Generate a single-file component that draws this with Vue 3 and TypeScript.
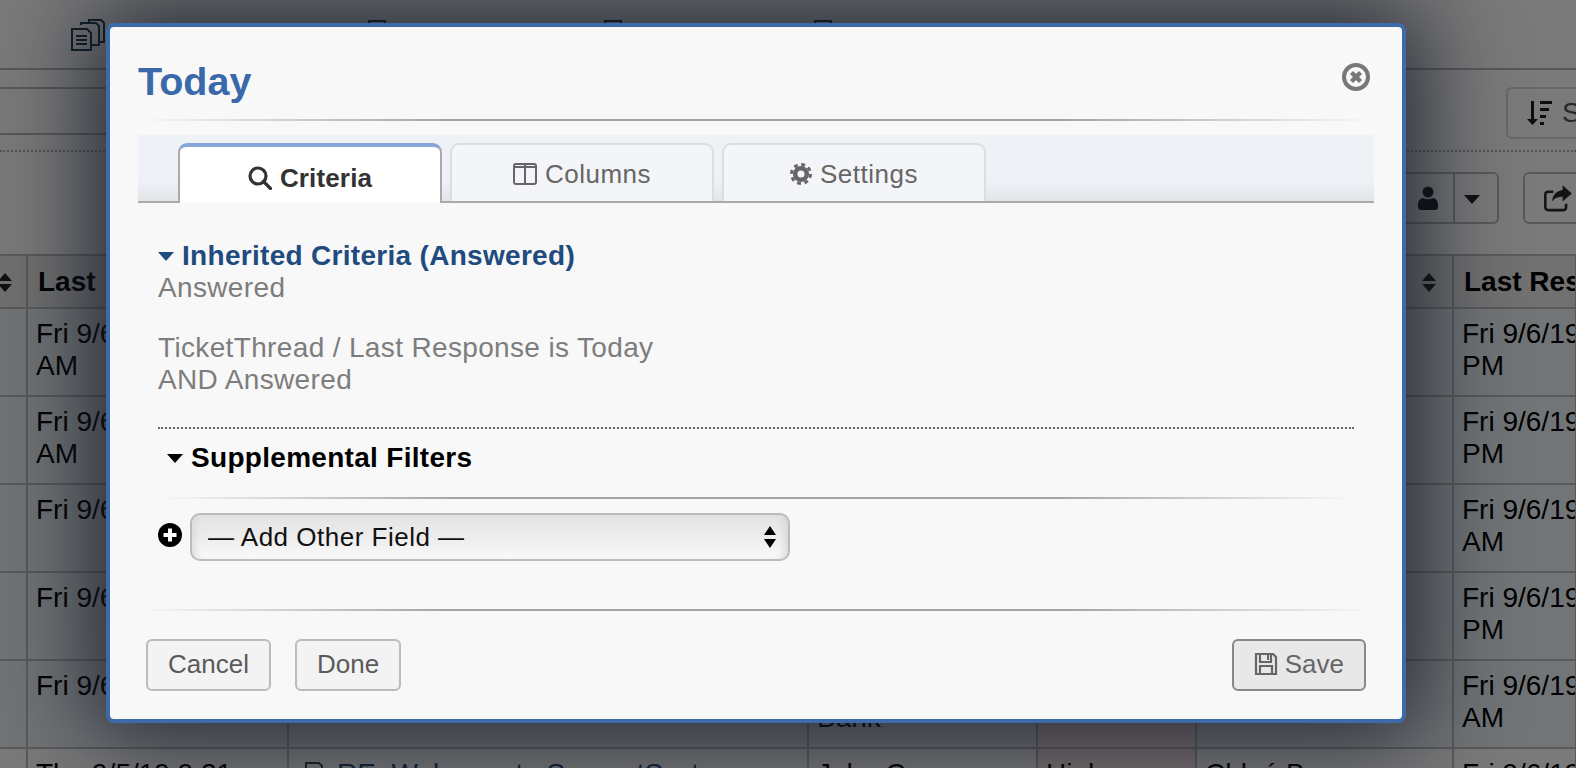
<template>
  <div class="page">
    <!-- page behind the dialog -->
    <div class="topbar">
      <svg class="docs" width="34" height="32" viewBox="0 0 34 32" fill="none" stroke="#1d3f56" stroke-width="2">
        <path d="M18 4V1h12l3 3v19h-5" />
        <path d="M10 6V4h15l3 3v19h-7" />
        <path d="M1 10h15l4 4v17H1z" />
        <path d="M5 17h11M5 21h11M5 25h11" />
      </svg>
      <i class="peek" style="left: 368px"></i>
      <i class="peek" style="left: 604px"></i>
      <i class="peek" style="left: 814px"></i>
    </div>
    <div class="searchrow">
      <div class="searchbox"></div>
      <button class="sort">
        <svg width="26" height="26" viewBox="0 0 26 26" fill="#1f1f22">
          <path d="M5 1h3v18h4l-5.500 6L1 19h4zM14 1h12v3H14zM14 8h9v3h-9zM14 15h6v3h-6zM14 22h4v3h-4z" />
        </svg>
        Sort
      </button>
    </div>
    <div class="actions">
      <div class="group">
        <span class="group-cell">
          <svg width="22" height="24" viewBox="0 0 22 24" fill="#1f1f24">
            <circle cx="11" cy="6" r="5.500" />
            <path d="M1 19c0-5 3-7 5-7 2 1.500 8 1.500 10 0 2 0 5 2 5 7v2c0 1.500-1 3-3 3H4c-2 0-3-1.500-3-3z" />
          </svg>
        </span>
        <span class="group-cell caret-cell"><i class="caret-dark"></i></span>
      </div>
      <div class="share">
        <svg width="30" height="28" viewBox="0 0 26 24" fill="none" stroke="#2a2a2e" stroke-width="2.200">
          <path d="M20 17v3c0 1.500-1 2.500-2.500 2.500h-13C3 22.500 2 21.500 2 20V9c0-1.500 1-2.500 2.500-2.500H9" />
          <path d="M17 1l8 7-8 7v-4c-4 0-7 1-9 4 0-6 4-9 9-10z" fill="#2a2a2e" stroke="none" />
        </svg>
      </div>
    </div>
    <table class="grid">
      <colgroup>
        <col v-for="w in colWidths" :key="w" :style="{ width: w + 'px' }" />
      </colgroup>
      <thead>
        <tr>
          <th><span class="sorter left"></span></th>
          <th>Last</th>
          <th></th>
          <th></th>
          <th></th>
          <th><span class="sorter right"></span></th>
          <th>Last Response</th>
        </tr>
      </thead>
      <tbody>
        <tr v-for="(row, i) in rows" :key="i">
          <td></td>
          <td>{{ row.first }}</td>
          <td></td>
          <td>{{ row.owner }}</td>
          <td class="high"></td>
          <td></td>
          <td>{{ row.last }}</td>
        </tr>
        <tr class="plain">
          <td></td>
          <td>Thu 9/5/19 9:21</td>
          <td class="subject">
            <svg class="ticket" width="22" height="22" viewBox="0 0 22 22" fill="none" stroke="#444" stroke-width="2">
              <path d="M3 2h13l3 3v16H3z" />
            </svg>
            <a>RE: Welcome to SupportSystem</a>
            <i class="dot" style="right: 46px"></i>
            <i class="dot" style="right: 20px"></i>
          </td>
          <td>John C</td>
          <td class="high">High</td>
          <td>Chloé B</td>
          <td>Fri 9/6/19</td>
        </tr>
      </tbody>
    </table>

    <div class="overlay"></div>

    <!-- dialog -->
    <div class="dialog">
      <div class="head">
        <h1>Today</h1>
        <svg class="close" width="28" height="28" viewBox="0 0 28 28">
          <circle cx="14" cy="14" r="12" fill="none" stroke="#777" stroke-width="4" />
          <path d="M9.500 9.500l9 9M18.500 9.500l-9 9" stroke="#777" stroke-width="4.500" />
        </svg>
      </div>
      <hr class="fade" />

      <div class="tabs">
        <div v-for="t in tabs" :key="t.name" class="tab" :class="{ active: t.name === activeTab }">
          <svg v-if="t.name === 'Criteria'" width="24" height="24" viewBox="0 0 24 24" fill="none" stroke="#333" stroke-width="3.200">
            <circle cx="10" cy="10" r="8" />
            <path d="M15.500 15.500l7 7" stroke-linecap="round" />
          </svg>
          <svg v-else-if="t.name === 'Columns'" width="24" height="22" viewBox="0 0 24 22" fill="none" stroke="#666" stroke-width="2">
            <rect x="1" y="1" width="22" height="20" rx="2" />
            <path d="M12 1v20M1 4h22" />
          </svg>
          <svg v-else width="22" height="22" viewBox="0 0 22 22">
            <circle cx="11" cy="11" r="9.500" fill="none" stroke="#666" stroke-width="3" stroke-dasharray="3.800 3.660" />
            <circle cx="11" cy="11" r="5.800" fill="none" stroke="#666" stroke-width="4.500" />
          </svg>
          <span>{{ t.name }}</span>
        </div>
      </div>

      <div class="body">
        <h2 class="inherited"><i class="caret blue"></i>Inherited Criteria (Answered)</h2>
        <p class="crit">Answered</p>
        <p class="crit spaced">TicketThread / Last Response is Today<br />AND Answered</p>
        <div class="dots"></div>
        <h2 class="supp"><i class="caret"></i>Supplemental Filters</h2>
        <hr class="fade narrow" />
        <div class="addrow">
          <svg width="24" height="24" viewBox="0 0 24 24">
            <circle cx="12" cy="12" r="12" fill="#000" />
            <path d="M12 5.500v13M5.500 12h13" stroke="#fff" stroke-width="4" />
          </svg>
          <div class="selectwrap">
            <select v-model="field">
              <option>— Add Other Field —</option>
            </select>
            <svg class="updown" width="14" height="24" viewBox="0 0 14 24" fill="#000">
              <path d="M7 1l6 9H1zM1 14h12l-6 9z" />
            </svg>
          </div>
        </div>
      </div>

      <hr class="fade" />
      <div class="foot">
        <button class="btn">Cancel</button>
        <button class="btn">Done</button>
        <button class="btn save">
          <svg width="24" height="24" viewBox="0 0 24 24" fill="none" stroke="#666" stroke-width="2.200">
            <path d="M2 2h17l3 3v17H2z" />
            <path d="M6 2v8h11V2M6 22v-8h12v8" />
            <path d="M13 3h2v5h-2z" fill="#666" stroke="none" />
          </svg>
          Save
        </button>
      </div>
    </div>
  </div>
</template>

<script setup lang="ts">
import { ref } from 'vue'

interface Row { first: string; owner: string; last: string }

const colWidths = [27, 261, 520, 229, 159, 257, 123]

const rows: Row[] = [
  { first: 'Fri 9/6/19 9:14\nAM', owner: '', last: 'Fri 9/6/19 1:05\nPM' },
  { first: 'Fri 9/6/19 9:02\nAM', owner: '', last: 'Fri 9/6/19 12:41\nPM' },
  { first: 'Fri 9/6/19 8:47', owner: '', last: 'Fri 9/6/19 11:32\nAM' },
  { first: 'Fri 9/6/19 8:30', owner: '', last: 'Fri 9/6/19 12:15\nPM' },
  { first: 'Fri 9/6/19 8:12', owner: 'First National\nBank', last: 'Fri 9/6/19 10:58\nAM' },
]

const tabs = [{ name: 'Criteria' }, { name: 'Columns' }, { name: 'Settings' }]
const activeTab = ref('Criteria')
const field = ref('— Add Other Field —')
</script>

<style>
html, body { margin: 0; overflow: hidden; }
</style>

<style scoped>
.page {
  position: relative;
  width: 1576px;
  height: 768px;
  overflow: hidden;
  background: #fff;
  font-family: "Liberation Sans", Arial, sans-serif;
  font-size: 28px;
  line-height: 32px;
  color: #000;
}

/* background page */
.topbar { position: relative; height: 68px; border-bottom: 2px solid #b8b8b8; }
.docs { position: absolute; left: 71px; top: 19px; }
.peek { position: absolute; top: 20px; width: 18px; height: 8px; border: 2px solid #1d3f56; box-sizing: border-box; }
.searchrow {
  display: flex;
  justify-content: space-between;
  height: 82px;
  padding-top: 17px;
  box-sizing: border-box;
  border-bottom: 2px dotted #b0b0b0;
}
.searchbox { width: 300px; height: 44px; border-top: 2px solid #b8b8b8; border-bottom: 2px solid #b8b8b8; }
.sort {
  display: flex;
  align-items: center;
  gap: 10px;
  margin-left: auto;
  width: 120px;
  margin-right: -50px;
  height: 52px;
  padding: 0 18px 0 12px;
  border: 2px solid #d8d8d8;
  border-radius: 6px;
  background: #fff;
  color: #555;
  font: inherit;
}
.sort svg { margin-left: 6px; flex: none; }
.actions { display: flex; justify-content: flex-end; gap: 24px; height: 102px; padding: 20px 0 0; box-sizing: border-box; margin-right: -30px; }
.group { display: flex; height: 52px; width: 200px; border: 2px solid #bbb; border-radius: 6px; box-sizing: border-box; justify-content: flex-end; }
.group-cell { display: flex; align-items: center; justify-content: center; width: 44px; margin-right: 3px; }
.caret-cell { border-left: 2px solid #bbb; width: 44px; margin-right: 0; padding-right: 8px; box-sizing: border-box; }
.caret-dark { border: 8px solid transparent; border-top: 9px solid #222; border-bottom: 0; margin-top: 2px; }
.share { display: flex; align-items: center; padding-left: 18px; width: 83px; height: 52px; border: 2px solid #bbb; border-radius: 6px; box-sizing: border-box; }

.grid { table-layout: fixed; width: 1576px; border-collapse: collapse; }
.grid th, .grid td {
  border: 2px solid #bdbdbd;
  padding: 9px 8px 0;
  text-align: left;
  vertical-align: top;
  overflow: hidden;
  white-space: pre;
  height: 88px;
  box-sizing: border-box;
}
.grid tr > :first-child { border-left: 0; }
.grid th { height: 53px; padding: 10px 10px 0; background: #ececec; position: relative; }
.grid td { background: #eff4f8; }
.grid .plain td { background: #fff; }
.grid td.high { background: #ffeaea; }
.grid .subject { position: relative; }
.ticket { position: absolute; left: 14px; top: 12px; }
.subject a { margin-left: 40px; color: #1f4a80; }
.dot { position: absolute; top: 20px; width: 16px; height: 16px; border-radius: 50%; background: #999; }
.sorter { position: absolute; top: 17px; width: 0; height: 0; border: 7px solid transparent; border-bottom: 8px solid #222; }
.sorter::after { content: ""; position: absolute; left: -7px; top: 11px; border: 7px solid transparent; border-top: 8px solid #222; border-bottom: 0; }
.sorter.left { left: -2px; top: 10px; }
.sorter.right { right: 16px; top: 10px; }

.overlay { position: absolute; inset: 0; background: rgba(0, 0, 0, 0.52); }

/* dialog */
.dialog {
  position: absolute;
  left: 106px;
  top: 23px;
  width: 1300px;
  height: 700px;
  box-sizing: border-box;
  padding: 0 28px;
  background: #f8f8f8;
  border: 4px solid #3d6aa8;
  border-radius: 8px;
  box-shadow: 0 0 95px 14px rgba(22, 26, 40, 0.88);
}
.head { display: flex; align-items: center; justify-content: space-between; height: 92px; padding: 18px 4px 2px 0; box-sizing: border-box; }
h1 { margin: 0; font-size: 39.500px; line-height: 46px; font-weight: 700; color: #3a69a9; }
.close { margin-top: -8px; }
.fade {
  height: 2px;
  margin: 0;
  border: 0;
  background: linear-gradient(to right, rgba(160, 160, 160, 0), #a4a4a4 25%, #a4a4a4 75%, rgba(160, 160, 160, 0));
}

.tabs {
  display: flex;
  gap: 8px;
  height: 68px;
  margin-top: 14px;
  padding: 8px 0 0 40px;
  box-sizing: border-box;
  background: linear-gradient(to bottom, #eef1f6 0, #eef1f6 70%, #e2e4e8 100%);
  border-bottom: 2px solid #aaa;
}
.tab {
  display: flex;
  align-items: center;
  justify-content: center;
  gap: 8px;
  width: 264px;
  height: 58px;
  box-sizing: border-box;
  padding-top: 2px;
  background: #f4f5f8;
  border: 2px solid #dcdde0;
  border-bottom: 0;
  border-radius: 9px 9px 0 0;
  color: #666;
  font-size: 26px;
  letter-spacing: 0.5px;
}
.tab.active {
  height: 60px;
  padding-top: 6px;
  gap: 8px;
  background: #fff;
  border-color: #85a6d6 #aaa #fff;
  border-width: 4px 2px 0;
  color: #333;
  font-weight: 700;
  letter-spacing: 0.15px;
}

.body { height: 406px; padding: 0 20px; box-sizing: border-box; }
h2 { margin: 0; font-size: 28px; line-height: 32px; font-weight: 700; display: flex; align-items: center; letter-spacing: 0.3px; }
.inherited { padding-top: 37px; color: #204b7e; }
.crit { margin: 0; color: #7d7d7d; font-size: 28px; line-height: 32px; letter-spacing: 0.35px; }
.crit.spaced { margin-top: 28px; }
.caret { display: inline-block; border: 8px solid transparent; border-top: 9px solid #000; border-bottom: 0; margin-right: 8px; }
.caret.blue { border-top-color: #204b7e; }
.dots { margin-top: 31px; border-top: 2px dotted #666; }
.supp { margin-top: 13px; padding-left: 9px; }
.narrow { margin-top: 23px; }
.addrow { display: flex; align-items: flex-start; gap: 8px; margin-top: 14px; }
.addrow > svg { margin-top: 10px; }
.selectwrap { position: relative; width: 600px; height: 48px; }
select {
  appearance: none;
  width: 100%;
  height: 100%;
  padding: 0 16px;
  box-sizing: border-box;
  font: 26px "Liberation Sans", Arial, sans-serif;
  letter-spacing: 0.5px;
  color: #111;
  border: 2px solid #bcbcbc;
  border-radius: 10px;
  background: linear-gradient(to bottom, #e4e4e4 0, #ececec 50%, #fafafa 100%);
  box-shadow: inset 8px 0 8px -6px #d8d8d8, inset -8px 0 8px -6px #d0d0d0;
}
.updown { position: absolute; right: 13px; top: 12px; pointer-events: none; }

.foot { display: flex; gap: 24px; padding: 28px 8px 0; }
.btn {
  display: flex;
  align-items: center;
  gap: 7px;
  height: 52px;
  padding: 0 20px 2px;
  box-sizing: border-box;
  font: 26px "Liberation Sans", Arial, sans-serif;
  color: #5a5a5a;
  background: #f3f3f3;
  border: 2px solid #bbb;
  border-radius: 6px;
}
.save { margin-left: auto; background: #e8e8e8; border-color: #888; color: #666; }
</style>
